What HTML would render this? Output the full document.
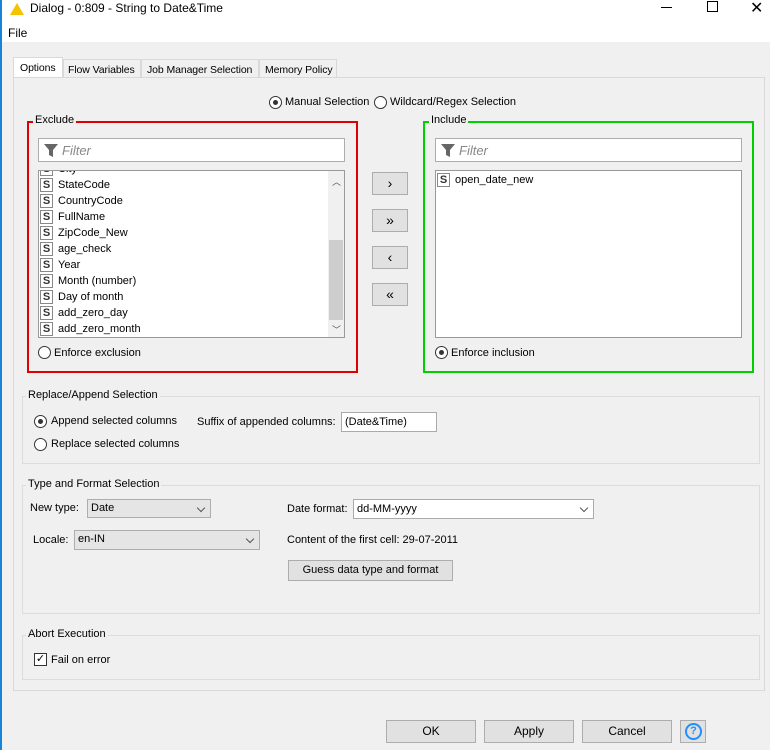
<!DOCTYPE html>
<html><head><style>
*{box-sizing:border-box;margin:0;padding:0}
body{width:770px;height:750px;background:#f0f0f0;font-family:"Liberation Sans",sans-serif;font-size:11px;color:#000;position:relative;overflow:hidden;white-space:nowrap}
.a{position:absolute}
.box{position:absolute;border:1px solid #dcdcdc}
.lbl{position:absolute;background:#f0f0f0;padding:0 2px}
.radio{position:absolute;width:13px;height:13px;border:1px solid #333;border-radius:50%;background:#fff}
.radio.on::after{content:"";position:absolute;left:3px;top:3px;width:5px;height:5px;border-radius:50%;background:#333}
.btn{position:absolute;background:#e1e1e1;border:1px solid #adadad;text-align:center}
.inp{position:absolute;background:#fff;border:1px solid #7a7a7a}
.sel{position:absolute;background:#e5e5e5;border:1px solid #adadad;padding:2px 0 0 3px}
.chev{position:absolute;right:6px;top:5px;width:6px;height:6px;border-right:1px solid #555;border-bottom:1px solid #555;transform:rotate(45deg)}
.s{display:inline-block;width:13px;height:14px;border:1px solid #888;font-weight:bold;font-size:11px;text-align:center;line-height:12px;margin-right:5px;background:#fff;color:#333}
.row{height:16px;line-height:16px;padding-left:1px;white-space:nowrap}
.tab{position:absolute;border:1px solid #d9d9d9;border-bottom:none;font-size:10.5px;letter-spacing:-0.1px}
</style></head><body>
<div class="a" style="left:0;top:0;width:770px;height:42px;background:#fff"></div>
<svg class="a" style="left:9px;top:2px" width="16" height="14"><polygon points="8,1 15,13 1,13" fill="#f5c400"/></svg>
<div class="a" style="left:30px;top:1px;font-size:12px">Dialog - 0:809 - String to Date&amp;Time</div>
<div class="a" style="left:661px;top:7px;width:11px;height:1px;background:#000"></div>
<div class="a" style="left:707px;top:1px;width:11px;height:11px;border:1px solid #000"></div>
<div class="a" style="left:750px;top:-2px;font-size:16px">✕</div>
<div class="a" style="left:8px;top:26px;font-size:12px">File</div>
<div class="a" style="left:0;top:0;width:2px;height:750px;background:#1883d7"></div>

<!-- tabs -->
<div class="tab" style="left:13px;top:57px;width:50px;height:21px;background:#fff;padding:4px 0 0 6px">Options</div>
<div class="tab" style="left:63px;top:59px;width:78px;height:18px;padding:4px 0 0 4px">Flow Variables</div>
<div class="tab" style="left:141px;top:59px;width:118px;height:18px;padding:4px 0 0 5px">Job Manager Selection</div>
<div class="tab" style="left:259px;top:59px;width:78px;height:18px;padding:4px 0 0 5px">Memory Policy</div>
<div class="a" style="left:13px;top:77px;width:752px;height:614px;border:1px solid #d9d9d9"></div>

<div class="radio on" style="left:269px;top:96px"></div>
<div class="a" style="left:285px;top:96px">Manual Selection</div>
<div class="radio" style="left:374px;top:96px"></div>
<div class="a" style="left:390px;top:96px">Wildcard/Regex Selection</div>

<!-- exclude -->
<div class="a" style="left:27px;top:121px;width:331px;height:252px;border:2px solid #e00000"></div>
<div class="lbl" style="left:33px;top:114px">Exclude</div>
<div class="inp" style="left:38px;top:138px;width:307px;height:24px;border-color:#adadad"></div>
<svg class="a" style="left:43px;top:143px" width="16" height="15"><path d="M1 1H15L10 7V14L6 12V7Z" fill="#666"/></svg>
<div class="a" style="left:62px;top:143px;color:#888;font-style:italic;font-size:13px">Filter</div>
<div class="inp" style="left:38px;top:170px;width:307px;height:168px;border-color:#999;overflow:hidden">
<div style="margin-top:-10px">
<div class="row"><span class="s">S</span>City</div>
<div class="row"><span class="s">S</span>StateCode</div>
<div class="row"><span class="s">S</span>CountryCode</div>
<div class="row"><span class="s">S</span>FullName</div>
<div class="row"><span class="s">S</span>ZipCode_New</div>
<div class="row"><span class="s">S</span>age_check</div>
<div class="row"><span class="s">S</span>Year</div>
<div class="row"><span class="s">S</span>Month (number)</div>
<div class="row"><span class="s">S</span>Day of month</div>
<div class="row"><span class="s">S</span>add_zero_day</div>
<div class="row"><span class="s">S</span>add_zero_month</div>
</div>
<div class="a" style="right:0;top:0;width:16px;height:166px;background:#f0f0f0"></div>
<div class="a" style="right:1px;top:69px;width:14px;height:80px;background:#cdcdcd"></div>
<div class="a" style="right:3px;top:4px;font-size:9px;color:#555">︿</div>
<div class="a" style="right:3px;bottom:1px;font-size:9px;color:#555">﹀</div>
</div>
<div class="radio" style="left:38px;top:346px"></div>
<div class="a" style="left:54px;top:347px">Enforce exclusion</div>

<!-- buttons -->
<div class="btn" style="left:372px;top:172px;width:36px;height:23px;font-size:14px;line-height:20px">›</div>
<div class="btn" style="left:372px;top:209px;width:36px;height:23px;font-size:14px;line-height:20px">»</div>
<div class="btn" style="left:372px;top:246px;width:36px;height:23px;font-size:14px;line-height:20px">‹</div>
<div class="btn" style="left:372px;top:283px;width:36px;height:23px;font-size:14px;line-height:20px">«</div>

<!-- include -->
<div class="a" style="left:423px;top:121px;width:331px;height:252px;border:2px solid #00d000"></div>
<div class="lbl" style="left:429px;top:114px">Include</div>
<div class="inp" style="left:435px;top:138px;width:307px;height:24px;border-color:#adadad"></div>
<svg class="a" style="left:440px;top:143px" width="16" height="15"><path d="M1 1H15L10 7V14L6 12V7Z" fill="#666"/></svg>
<div class="a" style="left:459px;top:143px;color:#888;font-style:italic;font-size:13px">Filter</div>
<div class="inp" style="left:435px;top:170px;width:307px;height:168px;border-color:#999">
<div class="row" style="margin-top:1px"><span class="s">S</span>open_date_new</div>
</div>
<div class="radio on" style="left:435px;top:346px"></div>
<div class="a" style="left:451px;top:347px">Enforce inclusion</div>

<!-- replace/append -->
<div class="box" style="left:22px;top:396px;width:738px;height:68px"></div>
<div class="lbl" style="left:26px;top:389px">Replace/Append Selection</div>
<div class="radio on" style="left:34px;top:415px"></div>
<div class="a" style="left:51px;top:415px">Append selected columns</div>
<div class="radio" style="left:34px;top:438px"></div>
<div class="a" style="left:51px;top:438px">Replace selected columns</div>
<div class="a" style="left:197px;top:416px">Suffix of appended columns:</div>
<div class="inp" style="left:341px;top:412px;width:96px;height:20px;border-color:#aaa;padding:3px 0 0 3px">(Date&amp;Time)</div>

<!-- type and format -->
<div class="box" style="left:22px;top:485px;width:738px;height:129px"></div>
<div class="lbl" style="left:26px;top:478px">Type and Format Selection</div>
<div class="a" style="left:30px;top:502px">New type:</div>
<div class="sel" style="left:87px;top:499px;width:124px;height:19px">Date<div class="chev"></div></div>
<div class="a" style="left:33px;top:534px">Locale:</div>
<div class="sel" style="left:74px;top:530px;width:186px;height:20px">en-IN<div class="chev"></div></div>
<div class="a" style="left:287px;top:503px">Date format:</div>
<div class="inp" style="left:353px;top:499px;width:241px;height:20px;border-color:#aaa;padding:3px 0 0 3px">dd-MM-yyyy<div class="chev"></div></div>
<div class="a" style="left:287px;top:534px">Content of the first cell: 29-07-2011</div>
<div class="btn" style="left:288px;top:560px;width:165px;height:21px;line-height:19px">Guess data type and format</div>

<!-- abort -->
<div class="box" style="left:22px;top:635px;width:738px;height:45px"></div>
<div class="lbl" style="left:26px;top:628px">Abort Execution</div>
<div class="a" style="left:34px;top:653px;width:13px;height:13px;border:1px solid #333;background:#fff;font-size:11px;line-height:11px;text-align:center">✓</div>
<div class="a" style="left:51px;top:654px">Fail on error</div>

<!-- bottom -->
<div class="btn" style="left:386px;top:720px;width:90px;height:23px;line-height:21px;font-size:12px">OK</div>
<div class="btn" style="left:484px;top:720px;width:90px;height:23px;line-height:21px;font-size:12px">Apply</div>
<div class="btn" style="left:582px;top:720px;width:90px;height:23px;line-height:21px;font-size:12px">Cancel</div>
<div class="btn" style="left:680px;top:720px;width:26px;height:23px"><div class="a" style="left:4px;top:2px;width:17px;height:17px;border:2px solid #1e90ff;border-radius:50%;color:#1e90ff;font-weight:bold;font-size:11px;line-height:13px;text-align:center">?</div></div>
</body></html>
